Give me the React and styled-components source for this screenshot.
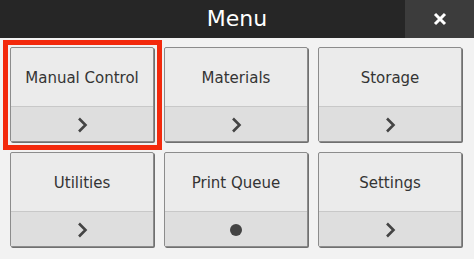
import React from 'react';
import styled, { createGlobalStyle } from 'styled-components';

const GlobalStyle = createGlobalStyle`
  html, body {
    margin: 0;
    padding: 0;
    background: #f2f2f2;
    font-family: "DejaVu Sans", "Liberation Sans", sans-serif;
  }
`;

const Screen = styled.div`
  width: 474px;
  height: 259px;
  display: flex;
  flex-direction: column;
  background: #f2f2f2;
  overflow: hidden;
`;

const Header = styled.div`
  height: 38px;
  display: flex;
  align-items: center;
  background: #262626;
  position: relative;
`;

const Title = styled.div`
  flex: 1;
  text-align: center;
  color: #ffffff;
  font-size: 22px;
  line-height: 38px;
`;

const CloseButton = styled.button`
  position: absolute;
  right: 0;
  top: 0;
  width: 69px;
  height: 38px;
  border: none;
  padding: 0;
  background: #3c3c3c;
  display: flex;
  align-items: center;
  justify-content: center;
  cursor: pointer;
`;

const Grid = styled.div`
  display: grid;
  grid-template-columns: repeat(3, 1fr);
  grid-auto-rows: 95px;
  gap: 10px;
  padding: 9px 12px 0 10px;
`;

const Card = styled.div`
  position: relative;
  display: flex;
  flex-direction: column;
  border: 1px solid #8c8c8c;
  border-radius: 2px;
  box-shadow: 1px 1px 0 #707070;
  background: #ebebeb;

  &::after {
    content: '';
    display: ${p => (p.selected ? 'block' : 'none')};
    position: absolute;
    top: -8px;
    left: -8px;
    right: -9px;
    bottom: -9px;
    border: 5px solid #f3290c;
    pointer-events: none;
  }
`;

const Label = styled.div`
  flex: 1;
  display: flex;
  align-items: center;
  justify-content: center;
  padding-top: 2px;
  color: #343434;
  font-size: 15px;
`;

const Footer = styled.div`
  height: 34px;
  border-top: 1px solid #c8c8c8;
  background: #dedede;
  display: flex;
  align-items: center;
  justify-content: center;
`;

const Dot = styled.span`
  width: 12px;
  height: 12px;
  border-radius: 50%;
  background: #434343;
  margin-top: 2px;
`;

const Chevron = () => (
  <svg width="14" height="18" viewBox="0 0 14 18" style={{ marginTop: 2 }}>
    <path d="M4 2.5 L10.5 9 L4 15.5" fill="none" stroke="#444" strokeWidth="2.6" />
  </svg>
);

const items = [
  { label: 'Manual Control', selected: true },
  { label: 'Materials' },
  { label: 'Storage' },
  { label: 'Utilities' },
  { label: 'Print Queue', dot: true },
  { label: 'Settings' },
];

export default function App() {
  return (
    <Screen>
      <GlobalStyle />
      <Header>
        <Title>Menu</Title>
        <CloseButton>
          <svg width="14" height="14" viewBox="0 0 14 14">
            <path d="M2 2 L12 12 M12 2 L2 12" stroke="#fff" strokeWidth="3" />
          </svg>
        </CloseButton>
      </Header>
      <Grid>
        {items.map(item => (
          <Card key={item.label} selected={item.selected}>
            <Label>{item.label}</Label>
            <Footer>{item.dot ? <Dot /> : <Chevron />}</Footer>
          </Card>
        ))}
      </Grid>
    </Screen>
  );
}
